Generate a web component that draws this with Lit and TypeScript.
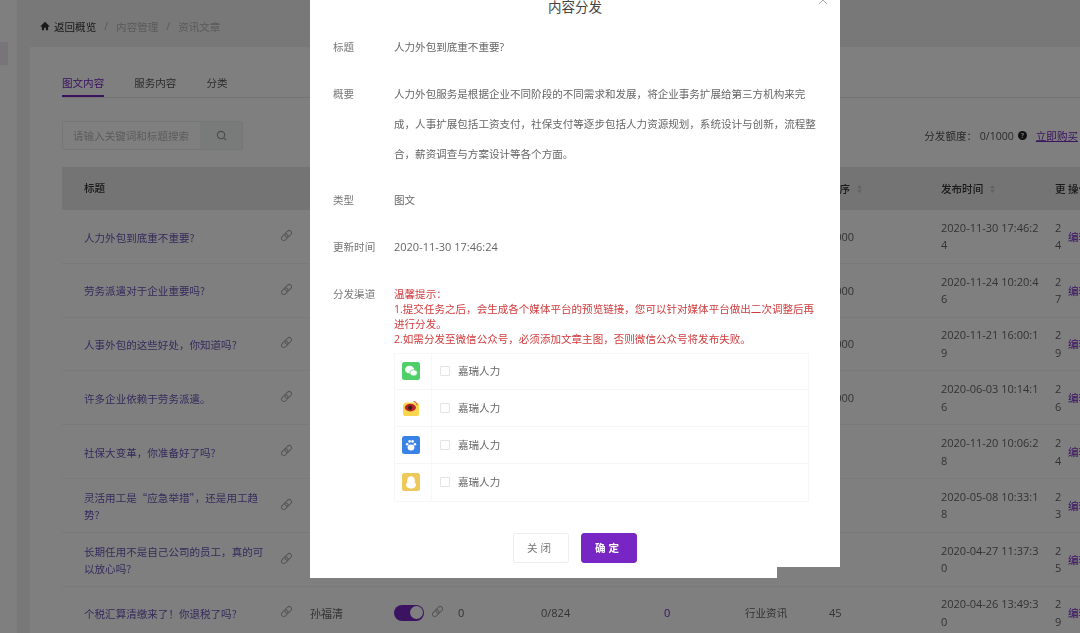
import { LitElement, css, html, svg } from "lit";
import { customElement } from "lit/decorators.js";

type Row = {
	title: string;
	date: string;
	num: string;
	sort?: string;
	author?: string;
	toggle?: boolean;
	reads?: string;
	ratio?: string;
	shares?: string;
	kind?: string;
};

const rows: Row[] = [
	{ title: "人力外包到底重不重要?", date: "2020-11-30 17:46:24", num: "24", sort: "1000" },
	{ title: "劳务派遣对于企业重要吗?", date: "2020-11-24 10:20:46", num: "27", sort: "1000" },
	{ title: "人事外包的这些好处\uFF0C你知道吗?", date: "2020-11-21 16:00:19", num: "29", sort: "1000" },
	{ title: "许多企业依赖于劳务派遣。", date: "2020-06-03 10:14:16", num: "26", sort: "1000" },
	{ title: "社保大变革\uFF0C你准备好了吗?", date: "2020-11-20 10:06:28", num: "24" },
	{ title: "灵活用工是\u201C应急举措\u201D\uFF0C还是用工趋势?", date: "2020-05-08 10:33:18", num: "23" },
	{ title: "长期任用不是自己公司的员工\uFF0C真的可以放心吗?", date: "2020-04-27 11:37:30", num: "25" },
	{
		title: "个税汇算清缴来了\uFF01你退税了吗?",
		date: "2020-04-26 13:49:30",
		num: "29",
		sort: "45",
		author: "孙福清",
		toggle: true,
		reads: "0",
		ratio: "0/824",
		shares: "0",
		kind: "行业资讯",
	},
];

const summary =
	"人力外包服务是根据企业不同阶段的不同需求和发展\uFF0C将企业事务扩展给第三方机构来完成\uFF0C人事扩展包括工资支付\uFF0C社保支付等逐步包括人力资源规划\uFF0C系统设计与创新\uFF0C流程整合\uFF0C薪资调查与方案设计等各个方面。";

const tips = [
	"温馨提示\uFF1A",
	"1.提交任务之后\uFF0C会生成各个媒体平台的预览链接\uFF0C您可以针对媒体平台做出二次调整后再进行分发。",
	"2.如需分发至微信公众号\uFF0C必须添加文章主图\uFF0C否则微信公众号将发布失败。",
];

const channels = ["wechat", "weibo", "baidu", "qq"];

const linkIcon = html`<svg class="link" viewBox="0 0 16 16" fill="none" stroke="currentColor" stroke-width="1.2">
	<g transform="rotate(-45 8 8)">
		<rect x="0.5" y="5.2" width="9" height="5.6" rx="2.8" />
		<rect x="6.5" y="5.2" width="9" height="5.6" rx="2.8" />
	</g>
</svg>`;

const sortIcon = html`<svg class="sort" viewBox="0 0 6 10" fill="currentColor">
	<path d="M3 0 6 4H0zM3 10 0 6h6z" />
</svg>`;

const channelIcons: Record<string, unknown> = {
	wechat: svg`<rect width="18" height="18" rx="2.5" fill="#4fcf68" />
		<ellipse cx="7.6" cy="7.6" rx="4.6" ry="3.8" fill="#fff" />
		<ellipse cx="11.6" cy="10.8" rx="3.8" ry="3.1" fill="#fff" stroke="#4fcf68" stroke-width="0.7" />`,
	weibo: svg`<path d="M1 5.5 3.5 3.5H14.5L17 5.5V15a2 2 0 0 1-2 2H3a2 2 0 0 1-2-2z" fill="#fbd64c" />
		<ellipse cx="8.4" cy="8.6" rx="5.6" ry="3.8" fill="#b8262a" />
		<circle cx="8.2" cy="8.7" r="2.1" fill="#33201c" />
		<path d="M11.5 2.5a3.5 3.5 0 0 1 3.6 3.6" fill="none" stroke="#c9402c" stroke-width="1" />`,
	baidu: svg`<rect width="18" height="18" rx="2.5" fill="#3a83e6" />
		<ellipse cx="9" cy="11.6" rx="3.4" ry="3" fill="#fff" />
		<circle cx="5.2" cy="8.2" r="1.3" fill="#fff" />
		<circle cx="7.6" cy="5.4" r="1.3" fill="#fff" />
		<circle cx="10.6" cy="5.4" r="1.3" fill="#fff" />
		<circle cx="12.9" cy="8.2" r="1.3" fill="#fff" />`,
	qq: svg`<rect width="18" height="18" rx="2.5" fill="#edc95c" />
		<ellipse cx="9" cy="7.6" rx="3.9" ry="4.4" fill="#fff" />
		<ellipse cx="9" cy="12" rx="5" ry="3.4" fill="#fff" />`,
};

@customElement("app-root")
export class AppRoot extends LitElement {
	static styles = css`
		:host {
			display: block;
			position: relative;
			width: 1080px;
			height: 633px;
			overflow: hidden;
			font-family: "Open Sans", "Noto Sans CJK SC", sans-serif;
			font-size: 10.56px;
			color: #666;
			background: #fff;
		}

		.stage {
			position: relative;
			height: 100%;
			overflow: hidden;
		}

		.page {
			display: flex;
			height: 100%;
			background: #f1f1f1;
			filter: blur(0.7px);
		}

		.side {
			flex: 0 0 17px;
			padding-top: 42px;
			background: #fff;
		}

		.side-item {
			width: 8px;
			height: 23px;
			background: #eeeaf4;
		}

		.main {
			flex: 1;
			min-width: 0;
			padding-left: 13px;
		}

		.crumbs {
			display: flex;
			align-items: center;
			gap: 8px;
			height: 47px;
			padding: 5px 0 0 10px;
			box-sizing: border-box;
			color: #b4b4b4;
		}

		.crumbs .home {
			display: flex;
			align-items: center;
			gap: 4px;
			color: #333;
		}

		.crumbs svg {
			width: 10px;
			height: 10px;
		}

		.card {
			height: 586px;
			padding: 25px 2px 0 32px;
			box-sizing: border-box;
			background: #fff;
			overflow: hidden;
		}

		.tabs {
			display: flex;
			gap: 30px;
			height: 25px;
			border-bottom: 1px solid #e8e8e8;
			color: #555;
			margin-right: -2px;
		}

		.tab {
			height: 25px;
			line-height: 22px;
			box-sizing: border-box;
		}

		.tab.on {
			color: #7726c3;
			border-bottom: 2px solid #7726c3;
		}

		.tools {
			display: flex;
			align-items: center;
			justify-content: space-between;
			margin-top: 23px;
			height: 29px;
		}

		.search {
			display: flex;
			width: 181px;
			height: 29px;
			border: 1px solid #ececec;
			box-sizing: border-box;
			border-radius: 2px;
		}

		.search input {
			width: 137px;
			padding: 0 0 0 10px;
			border: 0;
			box-sizing: border-box;
			background: transparent;
			font: inherit;
		}

		.search input::placeholder {
			color: #b8b8b8;
		}

		.search button {
			display: flex;
			flex: 1;
			align-items: center;
			justify-content: center;
			padding: 0;
			border: 0;
			background: #f3f5f5;
			color: #8a9a9a;
		}

		.search svg {
			width: 11px;
			height: 11px;
		}

		.quota {
			display: flex;
			align-items: center;
			gap: 4px;
			color: #555;
		}

		.help {
			display: inline-flex;
			align-items: center;
			justify-content: center;
			width: 9px;
			height: 9px;
			border-radius: 50%;
			background: #222;
			color: #ddd;
			font-size: 7px;
			font-weight: 700;
		}

		.buy {
			margin-left: 5px;
			color: #7726c3;
			text-decoration: underline;
		}

		.table {
			margin-top: 17px;
			width: 1100px;
		}

		.row {
			display: grid;
			grid-template-columns: 248px 84px 64px 83px 123px 81px 84px 112px 114px 13px 80px;
			align-items: center;
			height: 53.8px;
			box-sizing: border-box;
			border-bottom: 1px solid #f2f2f2;
			color: #666;
			font-size: 11px;
		}

		.row.head {
			height: 43px;
			background: #e8e8e8;
			border: 0;
			color: #333;
			font-size: 10.56px;
			font-weight: 500;
		}

		.row.head .name {
			padding-top: 0;
			margin-top: -2px;
		}

		.name {
			display: flex;
			align-items: center;
			padding: 2px 0 0 22px;
			box-sizing: border-box;
		}

		.name span {
			width: 180px;
			margin-right: 16px;
			line-height: 17.5px;
			font-family: "Noto Sans CJK SC", sans-serif;
			font-size: 10.56px;
			color: #6b55b8;
		}

		.link {
			width: 13px;
			height: 13px;
			flex: none;
			margin-top: -4px;
			color: #aaa;
		}

		.state {
			display: flex;
			align-items: center;
			gap: 7px;
		}

		.state .link {
			margin-top: -3px;
		}

		.toggle {
			display: flex;
			justify-content: flex-end;
			width: 30px;
			height: 16px;
			padding: 1.5px;
			border-radius: 8px;
			box-sizing: border-box;
			background: #7726c3;
		}

		.toggle i {
			width: 13px;
			height: 13px;
			border-radius: 50%;
			background: #fff;
		}

		.count {
			color: #7726c3;
		}

		.kind {
			font-size: 10.56px;
		}

		.sort {
			width: 5px;
			height: 8px;
			margin-left: 7px;
			color: #c4c4c4;
		}

		.date {
			width: 98px;
			word-break: break-all;
			line-height: 17.5px;
		}

		.num {
			width: 7px;
			word-break: break-all;
			line-height: 17.5px;
		}

		.op {
			color: #7726c3;
			font-size: 10.56px;
		}

		.mask {
			position: absolute;
			inset: 0;
			background: rgba(0, 0, 0, 0.5);
		}

		.modal {
			position: absolute;
			left: 310px;
			top: 0;
			width: 530px;
			height: 567px;
			background: #fff;
		}

		.modal::after {
			content: "";
			position: absolute;
			left: 0;
			top: 100%;
			width: 467px;
			height: 11px;
			background: #fff;
		}

		.modal h3 {
			height: 22px;
			margin: -7px 0 0;
			line-height: 28px;
			text-align: center;
			font-size: 13.5px;
			font-weight: 400;
			color: #444;
		}

		.close {
			position: absolute;
			left: 508px;
			top: -5px;
			width: 10px;
			height: 10px;
			color: #aaa;
		}

		.form {
			padding: 0 22px 0 23px;
			filter: blur(0.35px);
		}

		.item {
			display: grid;
			grid-template-columns: 61px 1fr;
			margin-top: 16.5px;
			line-height: 30.5px;
		}

		.item label {
			color: #777;
		}

		.summary {
			line-height: 30px;
		}

		.stamp {
			font-size: 11px;
		}

		.tips {
			margin-top: 7.5px;
			line-height: 15px;
			color: #d03a3c;
		}

		.channels {
			width: 415px;
			margin-top: 6px;
			border: 1px solid #f7f7f7;
			box-sizing: border-box;
		}

		.channel {
			display: flex;
			align-items: center;
			height: 36.8px;
			box-sizing: border-box;
			border-bottom: 1px solid #f5f5f5;
			line-height: 1;
		}

		.channel:last-child {
			border-bottom: 0;
		}

		.channel .logo {
			display: flex;
			align-items: center;
			height: 100%;
			width: 37px;
			padding-left: 7px;
			box-sizing: border-box;
			border-right: 1px solid #f8f8f8;
		}

		.channel svg {
			width: 18px;
			height: 18px;
		}

		.check {
			width: 10px;
			height: 10px;
			margin: 0 8px;
			border: 1px solid #e4e4e4;
			box-sizing: border-box;
			border-radius: 1px;
		}

		.actions {
			display: flex;
			justify-content: center;
			gap: 12px;
			margin: 31px 2px 0 0;
		}

		.btn {
			width: 56px;
			height: 30px;
			padding: 0;
			border: 1px solid #eee;
			border-radius: 2px;
			box-sizing: border-box;
			background: #fff;
			color: #777;
			font: inherit;
			letter-spacing: 3px;
		}

		.btn.primary {
			border-color: #7726c3;
			border-radius: 3px;
			background: #7726c3;
			color: #fff;
			font-weight: 700;
		}
	`;

	private renderRow(row: Row) {
		return html`<div class="row">
			<div class="name"><span lang="zh-CN">${row.title}</span>${linkIcon}</div>
			<div>${row.author ?? ""}</div>
			<div class="state">${row.toggle ? html`<div class="toggle"><i></i></div>${linkIcon}` : ""}</div>
			<div>${row.reads ?? ""}</div>
			<div>${row.ratio ?? ""}</div>
			<div class="count">${row.shares ?? ""}</div>
			<div class="kind">${row.kind ?? ""}</div>
			<div>${row.sort ?? ""}</div>
			<div class="date">${row.date}</div>
			<div class="num">${row.num}</div>
			<div class="op">编辑</div>
		</div>`;
	}

	private renderPage() {
		return html`<div class="page">
			<div class="side"><div class="side-item"></div></div>
			<div class="main">
				<div class="crumbs">
					<div class="home">
						<svg viewBox="0 0 12 12" fill="currentColor"><path d="M6 1 .5 6.2l.9.9.9-.8V11h2.6V8h2.2v3h2.6V6.3l.9.8.9-.9z" /></svg>
						<span>返回概览</span>
					</div>
					<span>/</span><span>内容管理</span><span>/</span><span>资讯文章</span>
				</div>
				<div class="card">
					<div class="tabs">
						<div class="tab on">图文内容</div>
						<div class="tab">服务内容</div>
						<div class="tab">分类</div>
					</div>
					<div class="tools">
						<div class="search">
							<input placeholder="请输入关键词和标题搜索" />
							<button>
								<svg viewBox="0 0 12 12" fill="none" stroke="currentColor" stroke-width="1.2"><circle cx="5.5" cy="5.5" r="4" /><path d="M8.5 8.5 11 11" /></svg>
							</button>
						</div>
						<div class="quota">
							<span>${"分发额度\uFF1A"} 0/1000</span><span class="help">?</span><span class="buy">立即购买</span>
						</div>
					</div>
					<div class="table">
						<div class="row head">
							<div class="name">标题</div>
							<div></div><div></div><div></div><div></div><div></div><div></div>
							<div>排序${sortIcon}</div>
							<div>发布时间${sortIcon}</div>
							<div>更</div>
							<div>操作</div>
						</div>
						${rows.map((r) => this.renderRow(r))}
					</div>
				</div>
			</div>
		</div>`;
	}

	private renderModal() {
		return html`<div class="modal">
			<svg class="close" viewBox="0 0 10 10" stroke="currentColor" stroke-width="1"><path d="M1 1l8 8M9 1 1 9" /></svg>
			<h3>内容分发</h3>
			<div class="form">
				<div class="item"><label>标题</label><div>人力外包到底重不重要?</div></div>
				<div class="item"><label>概要</label><div class="summary">${summary}</div></div>
				<div class="item"><label>类型</label><div>图文</div></div>
				<div class="item"><label>更新时间</label><div class="stamp">2020-11-30 17:46:24</div></div>
				<div class="item">
					<label>分发渠道</label>
					<div>
						<div class="tips">${tips.map((t) => html`<div>${t}</div>`)}</div>
						<div class="channels">
							${channels.map(
								(c) => html`<div class="channel">
									<div class="logo"><svg viewBox="0 0 18 18">${channelIcons[c]}</svg></div>
									<div class="check"></div>
									<span>嘉瑞人力</span>
								</div>`,
							)}
						</div>
					</div>
				</div>
				<div class="actions">
					<button class="btn">关闭</button>
					<button class="btn primary">确定</button>
				</div>
			</div>
		</div>`;
	}

	render() {
		return html`<div class="stage">${this.renderPage()}<div class="mask"></div>${this.renderModal()}</div>`;
	}
}
